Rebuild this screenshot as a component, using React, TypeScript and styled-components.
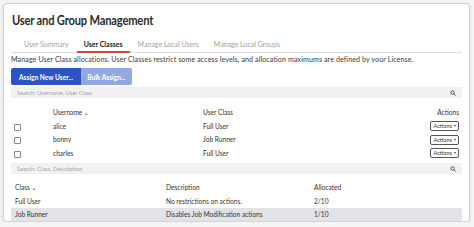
import React from 'react';
import styled, { createGlobalStyle } from 'styled-components';

const GlobalStyle = createGlobalStyle`
  html, body {
    margin: 0;
    padding: 0;
    background: #f4f4f4;
  }
  body {
    font-family: Lato, "Noto Sans", sans-serif;
    color: #333;
  }
`;

const Card = styled.div`
  margin: 3px 4px 0 3px;
  height: 219px;
  box-sizing: border-box;
  background: #fff;
  border: 1px solid #d4d4d4;
  border-radius: 4px;
  box-shadow: 0 1px 3px rgba(0, 0, 0, 0.15);
  padding: 9px 7px 0 7px;
  overflow: hidden;
`;

const Title = styled.h1`
  margin: 0 0 0 1px;
  font-size: 11.2px;
  line-height: 16px;
  font-weight: 700;
  color: #2b2b2b;
  letter-spacing: -0.2px;
  transform: scaleY(1.12);
  transform-origin: left center;
`;

const Tabs = styled.div`
  display: flex;
  margin-top: 9px;
  border-bottom: 1px solid #dcdcdc;
  padding-left: 6px;
`;

const Tab = styled.div<{ $active?: boolean }>`
  padding: 0 7px;
  height: 13px;
  line-height: 12px;
  font-size: 7px;
  color: ${p => (p.$active ? '#222' : '#a3a3a3')};
  font-weight: ${p => (p.$active ? 700 : 400)};
  border-bottom: 2px solid ${p => (p.$active ? '#c8474a' : 'transparent')};
  margin-bottom: -1px;
  margin-right: 1px;
  white-space: nowrap;
`;

const Intro = styled.p`
  margin: 2px 0 0 0;
  font-size: 7.1px;
  line-height: 10px;
  letter-spacing: 0.1px;
  color: #3a3a3a;
  white-space: nowrap;
`;

const ButtonRow = styled.div`
  display: flex;
  margin-top: 3px;
`;

const Button = styled.button<{ $light?: boolean }>`
  height: 17px;
  padding: 0 ${p => (p.$light ? 6 : 8)}px;
  border: none;
  border-radius: ${p => (p.$light ? '0 2px 2px 0' : '2px 0 0 2px')};
  background: ${p => (p.$light ? '#93a9e2' : '#2e53c4')};
  color: #fff;
  font-family: inherit;
  font-size: 6.6px;
  font-weight: 700;
  cursor: pointer;
`;

const Search = styled.div<{ $top: number }>`
  display: flex;
  align-items: center;
  justify-content: space-between;
  height: 11px;
  margin-top: ${p => p.$top}px;
  background: #f1f1f1;
  padding: 0 6px;
  font-size: 5.8px;
  color: #a5a5a5;
`;

const Table = styled.table<{ $top: number }>`
  width: 100%;
  table-layout: fixed;
  border-collapse: collapse;
  margin-top: ${p => p.$top}px;
  font-size: 6.6px;
  color: #333;
`;

const Th = styled.th<{ $w?: number; $right?: boolean }>`
  box-sizing: border-box;
  text-align: ${p => (p.$right ? 'right' : 'left')};
  font-weight: 400;
  height: 13.5px;
  line-height: 9px;
  padding: 0 3px 0 4px;
  width: ${p => (p.$w ? `${p.$w}px` : 'auto')};
`;

const Td = styled.td<{ $right?: boolean }>`
  text-align: ${p => (p.$right ? 'right' : 'left')};
  height: 13.5px;
  line-height: 9px;
  padding: 0 3px 0 4px;
  white-space: nowrap;
`;

const Tr = styled.tr<{ $hl?: boolean }>`
  background: ${p => (p.$hl ? '#e3e3e7' : 'transparent')};
`;

const Check = styled.span`
  display: inline-block;
  width: 5px;
  height: 5px;
  margin-left: -1px;
  border: 1px solid #888;
  border-radius: 1px;
  vertical-align: middle;
`;

const ActionButton = styled.span`
  display: inline-flex;
  align-items: center;
  gap: 2px;
  height: 8px;
  padding: 0 2px;
  border: 1px solid #555;
  border-radius: 2px;
  font-size: 5.6px;
  line-height: 8px;
  color: #333;
  vertical-align: middle;
`;

const Caret = styled.span`
  width: 0;
  height: 0;
  border-left: 1.5px solid transparent;
  border-right: 1.5px solid transparent;
  border-top: 2px solid #444;
`;

const Arrow = styled.span`
  font-size: 4px;
  color: #888;
  margin-left: 2px;
  vertical-align: middle;
`;

const SearchIcon = () => (
  <svg width="6" height="6" viewBox="0 0 12 12">
    <circle cx="5" cy="5" r="3.4" fill="none" stroke="#444" strokeWidth="1.8" />
    <line x1="7.5" y1="7.5" x2="11" y2="11" stroke="#444" strokeWidth="2" />
  </svg>
);

const users = [
  { name: 'alice', cls: 'Full User' },
  { name: 'bonny', cls: 'Job Runner' },
  { name: 'charles', cls: 'Full User' },
];

const classes = [
  { name: 'Full User', desc: 'No restrictions on actions.', alloc: '2/10' },
  { name: 'Job Runner', desc: 'Disables Job Modification actions', alloc: '1/10' },
];

export default function App() {
  return (
    <>
      <GlobalStyle />
      <Card>
        <Title>User and Group Management</Title>
        <Tabs>
          <Tab>User Summary</Tab>
          <Tab $active>User Classes</Tab>
          <Tab>Manage Local Users</Tab>
          <Tab>Manage Local Groups</Tab>
        </Tabs>
        <Intro>
          Manage User Class allocations. User Classes restrict some access levels, and allocation maximums are defined by your License.
        </Intro>
        <ButtonRow>
          <Button>Assign New User...</Button>
          <Button $light>Bulk Assign...</Button>
        </ButtonRow>
        <Search $top={2}>
          <span>Search: Username, User Class</span>
          <SearchIcon />
        </Search>
        <Table $top={8}>
          <thead>
            <tr>
              <Th $w={38}></Th>
              <Th $w={150}>
                Username<Arrow>▲</Arrow>
              </Th>
              <Th>User Class</Th>
              <Th $right>Actions</Th>
            </tr>
          </thead>
          <tbody>
            {users.map(u => (
              <Tr key={u.name}>
                <Td>
                  <Check />
                </Td>
                <Td>{u.name}</Td>
                <Td>{u.cls}</Td>
                <Td $right>
                  <ActionButton>
                    Actions <Caret />
                  </ActionButton>
                </Td>
              </Tr>
            ))}
          </tbody>
        </Table>
        <Search $top={3}>
          <span>Search: Class, Description</span>
          <SearchIcon />
        </Search>
        <Table $top={7}>
          <thead>
            <tr>
              <Th $w={151}>
                Class<Arrow>▲</Arrow>
              </Th>
              <Th $w={148}>Description</Th>
              <Th>Allocated</Th>
            </tr>
          </thead>
          <tbody>
            {classes.map((c, i) => (
              <Tr key={c.name} $hl={i === 1}>
                <Td>{c.name}</Td>
                <Td>{c.desc}</Td>
                <Td>{c.alloc}</Td>
              </Tr>
            ))}
          </tbody>
        </Table>
      </Card>
    </>
  );
}
